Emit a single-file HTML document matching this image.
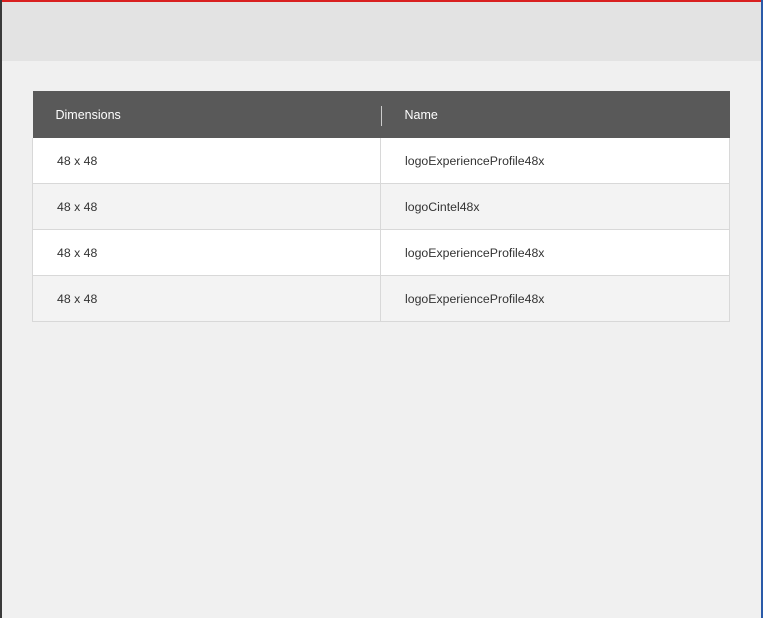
<!DOCTYPE html>
<html><head><style>
body{margin:0;width:763px;height:618px;background:#f0f0f0;position:relative;overflow:hidden;font-family:"Liberation Sans",sans-serif;font-size:12px;color:#333}
.l{position:absolute;left:0;top:0;width:2px;height:618px;background:#3a3a3a}
.r{position:absolute;right:0;top:0;width:2px;height:618px;background:#2a5aa8}
.t{position:absolute;left:0;top:0;width:763px;height:2px;background:#d92020}
.h{position:absolute;left:2px;top:2px;width:759px;height:59px;background:#e3e3e3}
table{position:absolute;left:32px;top:91px;width:698px;border-collapse:collapse}
th{background:#595959;color:#fff;font-weight:normal;text-align:left;height:47px;padding:0 0 0 23px;font-size:12.5px}
th+th{position:relative;padding-left:24px}
th+th:before{content:"";position:absolute;left:0;top:15px;height:20px;width:1px;background:#ccc}
td{height:45px;padding:0 0 0 24px;border:1px solid #d8d8d8;border-top:none;font-size:12.3px;color:#333}
td+td{padding-left:24px}
tr:nth-child(odd) td{background:#f3f3f3}
tr:nth-child(even) td{background:#fff}
</style></head><body>
<div class="h"></div><div class="t"></div><div class="l"></div><div class="r"></div>
<table>
<tr><th style="width:325px">Dimensions</th><th>Name</th></tr>
<tr><td>48 x 48</td><td>logoExperienceProfile48x</td></tr>
<tr><td>48 x 48</td><td>logoCintel48x</td></tr>
<tr><td>48 x 48</td><td>logoExperienceProfile48x</td></tr>
<tr><td>48 x 48</td><td>logoExperienceProfile48x</td></tr>
</table>
</body></html>
